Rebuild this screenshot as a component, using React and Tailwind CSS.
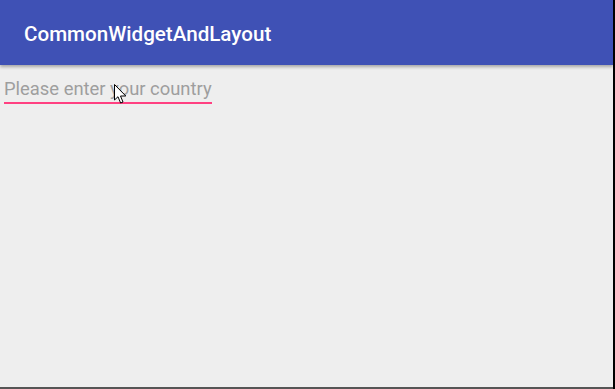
export default function App() {
  return (
    <div
      className="relative flex h-[389px] w-[615px] overflow-hidden bg-[#555555]"
      style={{ fontFamily: "Roboto, 'Noto Sans', sans-serif" }}
    >
      <div className="flex h-[387px] w-[613px] flex-col bg-[#eeeeee]">
        <header className="z-10 flex h-[65px] items-center bg-[#3f51b5] px-6 pt-[3px] shadow-[0_2px_3px_rgba(0,0,0,0.3)]">
          <h1 className="text-[20.6px] font-medium text-white">CommonWidgetAndLayout</h1>
        </header>
        <div className="px-1 pt-[13px]">
          <div className="w-[208px] border-b-2 border-[#ff4081]">
            <input
              className="w-full bg-transparent text-[18.4px] leading-[22px] text-[#9e9e9e] placeholder:text-[#9e9e9e] outline-none"
              placeholder="Please enter your country"
            />
          </div>
        </div>
      </div>
      <div className="w-[2px] bg-black" />
      <svg
        className="absolute left-[114px] top-[84px]"
        width="13"
        height="21"
        viewBox="0 0 13 21"
      >
        <path
          d="M0.5 0.5 L0.5 16 L4 12.7 L6.6 19 L9 18 L6.5 12 L11.8 12 Z"
          fill="#fff"
          stroke="#000"
          strokeWidth="1"
        />
      </svg>
    </div>
  );
}
